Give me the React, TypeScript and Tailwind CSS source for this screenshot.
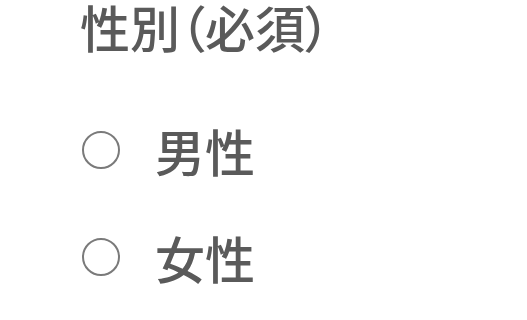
export default function App() {
  const options = ["男性", "女性"];

  return (
    <div className="w-[527px] h-[320px] bg-white pl-[80px] font-['Noto_Sans_CJK_JP','Noto_Sans_CJK_SC',sans-serif] font-medium text-[#5a5a5a]">
      <div className="pt-[1px] text-[50px] leading-none whitespace-nowrap [font-feature-settings:'palt']">
        性別（必須）
      </div>
      <div className="mt-[69px] flex flex-col gap-[47px]">
        {options.map((label) => (
          <label key={label} className="h-[60px] flex items-center">
            <span className="ml-[2px] w-[38px] h-[38px] rounded-full border-2 border-[#7a7a7a] bg-white" />
            <span className="ml-[35px] text-[50px] leading-none">{label}</span>
          </label>
        ))}
      </div>
    </div>
  );
}
